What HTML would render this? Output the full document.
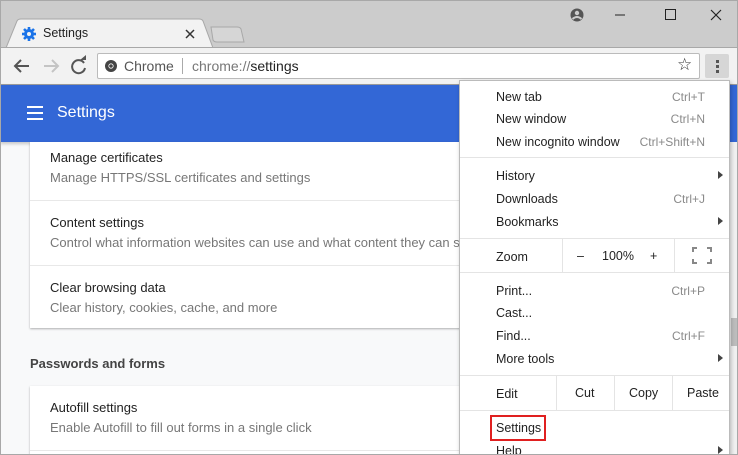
<!DOCTYPE html>
<html style="width:738px;height:455px;overflow:hidden"><head><style>
*{margin:0;padding:0;box-sizing:border-box}
body{width:738px;height:455px;overflow:hidden;position:relative;font-family:"Liberation Sans",sans-serif;background:#f8f9fa}
.abs{position:absolute}
.t{position:absolute;white-space:nowrap}
.m{font-size:12.5px;color:#222}
.k{font-size:12px;color:#8a8a8a;text-align:right;right:24px}
.sep{position:absolute;left:0;right:0;height:1px;background:#e4e4e4}
.arr{position:absolute;right:6px;width:0;height:0;border-left:5px solid #444;border-top:4px solid transparent;border-bottom:4px solid transparent}
.vl{position:absolute;width:1px;background:#e4e4e4}
</style></head><body>
<div class="abs" style="left:0;top:0;width:738px;height:47px;background:#cccccc"></div>
<svg class="abs" style="left:0;top:0" width="260" height="48">
<path d="M6 48 L17 21 Q18 19 21 19 L199 19 Q202 19 203 21 L213 48 Z" fill="#f2f2f2" stroke="#a8a8a8"/>
<path d="M211 27 L237 27 Q240 27 241 29 L244 42 L217 42 Q214 42 213 40 Z" fill="#d6d6d6" stroke="#a8a8a8"/>
<g transform="translate(29,34)" fill="#1a73e8"><circle r="5"/><g stroke="#1a73e8" stroke-width="2.6"><line x1="0" y1="-7" x2="0" y2="7"/><line x1="-7" y1="0" x2="7" y2="0"/><line x1="-5" y1="-5" x2="5" y2="5"/><line x1="-5" y1="5" x2="5" y2="-5"/></g><circle r="2" fill="#f2f2f2"/></g>
<path d="M186 30 l8 8 M194 30 l-8 8" stroke="#333" stroke-width="1.5"/>
</svg>
<div class="t" style="left:43px;top:26px;font-size:12.5px;color:#222">Settings</div>
<svg class="abs" style="left:560px;top:0" width="178" height="30">
<circle cx="17" cy="15" r="6.5" fill="#555"/><circle cx="17" cy="13" r="2.2" fill="#ccc"/><path d="M12.5 19 Q17 15 21.5 19" stroke="#ccc" stroke-width="2" fill="none"/>
<line x1="55" y1="15" x2="65" y2="15" stroke="#222" stroke-width="1"/>
<rect x="105.5" y="9.5" width="10" height="10" fill="none" stroke="#222"/>
<path d="M151 10 l10 10 M161 10 l-10 10" stroke="#222" stroke-width="1.2"/>
</svg>
<div class="abs" style="left:0;top:47px;width:738px;height:37px;background:#f2f2f2;border-top:1px solid #a8a8a8"></div>
<svg class="abs" style="left:0;top:47px" width="100" height="37">
<path d="M15 19 h14 M21 13 l-6 6 6 6" stroke="#555" stroke-width="2" fill="none"/>
<path d="M44 19 h14 M52 13 l6 6 -6 6" stroke="#c4c4c4" stroke-width="2" fill="none"/>
<path d="M84 16 A6.5 6.5 0 1 0 85 21" stroke="#555" stroke-width="2" fill="none"/><path d="M80 13 l6 0 0 -5z" fill="#555"/>
</svg>
<div class="abs" style="left:97px;top:53px;width:603px;height:26px;background:#fff;border:1px solid #bbb;border-radius:2px"></div>
<svg class="abs" style="left:104px;top:59px" width="14" height="14"><circle cx="7" cy="7" r="6" fill="#444"/><circle cx="7" cy="7" r="2.6" fill="#fff"/><circle cx="7" cy="7" r="1.8" fill="#444"/></svg>
<div class="t" style="left:124px;top:58px;font-size:14px;color:#555">Chrome</div>
<div class="abs" style="left:182px;top:58px;width:1px;height:16px;background:#aaa"></div>
<div class="t" style="left:192px;top:58px;font-size:14px;color:#777">chrome://<span style="color:#222">settings</span></div>
<div class="t" style="left:677px;top:55px;font-size:17px;color:#333">☆</div>
<div class="abs" style="left:705px;top:54px;width:24px;height:24px;background:#d6d6d6;border-radius:2px"></div>
<div class="abs" style="left:716px;top:60px;width:3px;height:3px;background:#555;box-shadow:0 5px 0 #555,0 10px 0 #555"></div>
<div class="abs" style="left:0;top:84px;width:738px;height:58px;background:#3367d6;border-top:1px solid #999;box-shadow:0 2px 3px rgba(0,0,0,.2)"></div>
<div class="abs" style="left:27px;top:106px;width:16px;height:2px;background:#fff;box-shadow:0 6px 0 #fff,0 12px 0 #fff"></div>
<div class="t" style="left:57px;top:104px;font-size:16px;color:#fff">Settings</div>
<div class="abs" style="left:30px;top:142px;width:440px;height:186px;background:#fff;box-shadow:0 1px 2px rgba(0,0,0,.3)"></div>
<div class="abs" style="left:30px;top:200px;width:440px;height:1px;background:#e8e8e8"></div>
<div class="abs" style="left:30px;top:265px;width:440px;height:1px;background:#e8e8e8"></div>
<div class="t" style="left:50px;top:150px;font-size:13px;color:#222">Manage certificates</div>
<div class="t" style="left:50px;top:170px;font-size:13px;color:#777">Manage HTTPS/SSL certificates and settings</div>
<div class="t" style="left:50px;top:215px;font-size:13px;color:#222">Content settings</div>
<div class="t" style="left:50px;top:235px;font-size:13px;color:#777">Control what information websites can use and what content they can s</div>
<div class="t" style="left:50px;top:280px;font-size:13px;color:#222">Clear browsing data</div>
<div class="t" style="left:50px;top:300px;font-size:13px;color:#777">Clear history, cookies, cache, and more</div>
<div class="t" style="left:30px;top:356px;font-size:13px;color:#444;font-weight:bold">Passwords and forms</div>
<div class="abs" style="left:30px;top:386px;width:440px;height:80px;background:#fff;box-shadow:0 1px 2px rgba(0,0,0,.3)"></div>
<div class="abs" style="left:30px;top:450px;width:440px;height:1px;background:#e8e8e8"></div>
<div class="t" style="left:50px;top:400px;font-size:13px;color:#222">Autofill settings</div>
<div class="t" style="left:50px;top:420px;font-size:13px;color:#777">Enable Autofill to fill out forms in a single click</div>
<div class="abs" style="left:730px;top:142px;width:7px;height:313px;background:#f0f0f0"></div>
<div class="abs" style="left:731px;top:318px;width:6px;height:28px;background:#bdbdbd"></div>
<div class="abs" style="left:459px;top:80px;width:271px;height:376px;background:#fff;border:1px solid #bbb;border-bottom:none;box-shadow:1px 2px 4px rgba(0,0,0,.25)">
<div class="t m" style="left:36px;top:9px">New tab</div><div class="t k" style="top:9px">Ctrl+T</div>
<div class="t m" style="left:36px;top:31px">New window</div><div class="t k" style="top:31px">Ctrl+N</div>
<div class="t m" style="left:36px;top:54px">New incognito window</div><div class="t k" style="top:54px">Ctrl+Shift+N</div>
<div class="sep" style="top:76px"></div>
<div class="t m" style="left:36px;top:88px">History</div><div class="arr" style="top:90px"></div>
<div class="t m" style="left:36px;top:111px">Downloads</div><div class="t k" style="top:111px">Ctrl+J</div>
<div class="t m" style="left:36px;top:134px">Bookmarks</div><div class="arr" style="top:136px"></div>
<div class="sep" style="top:157px"></div>
<div class="t m" style="left:36px;top:169px">Zoom</div>
<div class="vl" style="left:102px;top:157px;height:34px"></div>
<div class="t m" style="left:117px;top:168px">–</div>
<div class="t m" style="left:142px;top:168px">100%</div>
<div class="t m" style="left:190px;top:168px">+</div>
<div class="vl" style="left:214px;top:157px;height:34px"></div>
<svg class="abs" style="left:232px;top:166px" width="20" height="17"><path d="M1 5V1h4M15 1h4v4M19 12v4h-4M5 16H1v-4" stroke="#888" stroke-width="2" fill="none"/></svg>
<div class="sep" style="top:191px"></div>
<div class="t m" style="left:36px;top:203px">Print...</div><div class="t k" style="top:203px">Ctrl+P</div>
<div class="t m" style="left:36px;top:225px">Cast...</div>
<div class="t m" style="left:36px;top:248px">Find...</div><div class="t k" style="top:248px">Ctrl+F</div>
<div class="t m" style="left:36px;top:271px">More tools</div><div class="arr" style="top:273px"></div>
<div class="sep" style="top:294px"></div>
<div class="t m" style="left:36px;top:306px">Edit</div>
<div class="vl" style="left:96px;top:294px;height:35px"></div>
<div class="t m" style="left:115px;top:305px">Cut</div>
<div class="vl" style="left:154px;top:294px;height:35px"></div>
<div class="t m" style="left:169px;top:305px">Copy</div>
<div class="vl" style="left:212px;top:294px;height:35px"></div>
<div class="t m" style="left:227px;top:305px">Paste</div>
<div class="sep" style="top:329px"></div>
<div class="abs" style="left:30px;top:334px;width:56px;height:26px;border:2px solid #e02020"></div>
<div class="t m" style="left:36px;top:340px">Settings</div>
<div class="t m" style="left:36px;top:363px">Help</div><div class="arr" style="top:365px"></div>
</div>
<div class="abs" style="left:0;top:0;width:738px;height:455px;border:1px solid #a8a8a8;pointer-events:none"></div>
</body></html>
